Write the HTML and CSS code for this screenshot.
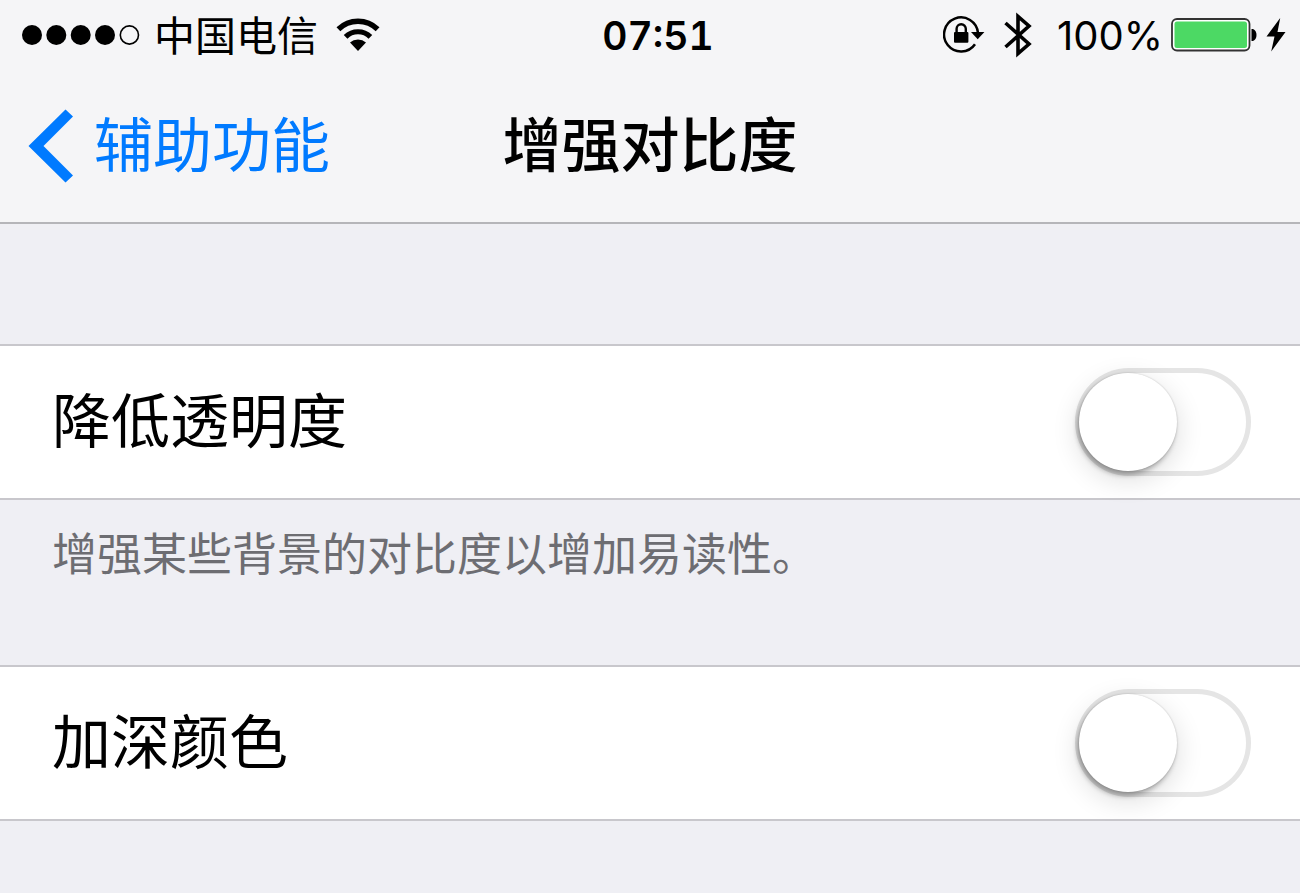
FILE: index.html
```html
<!DOCTYPE html>
<html lang="zh-CN">
<head>
  <meta charset="utf-8">
  <meta name="viewport" content="width=device-width, initial-scale=1">
  <title>增强对比度</title>
  <link rel="stylesheet" href="styles.css">
</head>
<body>
  <header class="top">
    <div class="status">
      <div class="status-left">
        <svg class="signal" width="118" height="20" viewBox="0 0 118 20" aria-hidden="true">
          <circle cx="10" cy="10" r="10"/>
          <circle cx="34.3" cy="10" r="10"/>
          <circle cx="58.7" cy="10" r="10"/>
          <circle cx="83" cy="10" r="10"/>
          <circle cx="107.4" cy="10" r="9.1" fill="none" stroke="#000" stroke-width="1.6"/>
        </svg>
        <span class="carrier">中国电信</span>
        <svg class="wifi" width="44" height="34" viewBox="0 0 44 34" aria-hidden="true">
          <path d="M2.4 11.2a28 28 0 0 1 39.2 0" fill="none" stroke="#000" stroke-width="5.4"/>
          <path d="M9.6 18.9a17.5 17.5 0 0 1 24.800 0" fill="none" stroke="#000" stroke-width="5.2"/>
          <path d="M22 33l-8-8.400a12 12 0 0 1 16 0z"/>
        </svg>
      </div>
      <time class="clock">07:51</time>
      <div class="status-right">
        <svg class="lock" width="42" height="38" viewBox="0 0 42 38" aria-hidden="true">
          <path d="M32 28.200A17 17 0 1 1 35 17" fill="none" stroke="#000" stroke-width="2.500"/>
          <path d="M28 16h13.400l-6.700 7.200z"/>
          <rect x="11" y="16" width="14.400" height="10.800" rx="1"/>
          <path d="M13.600 17v-4.200a4.600 4.600 0 0 1 9.200 0v4.200" fill="none" stroke="#000" stroke-width="2.400"/>
        </svg>
        <svg class="bluetooth" width="28" height="48" viewBox="0 0 28 48" aria-hidden="true">
          <path d="M1.500 12l23.500 21-11 9.500v-37l11 9.500-23.500 21" fill="none" stroke="#000" stroke-width="3.600"/>
        </svg>
        <span class="percent">100%</span>
        <svg class="battery" width="86" height="34" viewBox="0 0 86 34" aria-hidden="true">
          <rect x="1" y="1" width="77.500" height="31.500" rx="5" fill="#fff" stroke="#333" stroke-width="1.800"/>
          <rect x="3.500" y="3.500" width="72.500" height="26.500" rx="2.500" fill="#4cd964"/>
          <path d="M80.500 11h1.500q3.500 1.500 3.500 6t-3.500 6h-1.500z"/>
        </svg>
        <svg class="bolt" width="20" height="34" viewBox="0 0 20 34" aria-hidden="true">
          <path d="M14.200 0L0.500 18.500h8L5.200 33.500 19.500 14h-8z"/>
        </svg>
      </div>
    </div>
    <nav class="nav">
      <a class="back" href="#">
        <svg width="45" height="74" viewBox="0 0 45 74" aria-hidden="true">
          <path d="M37.500 0.500l7.500 7L15.500 37l29.500 29.500-7.500 7L0.500 37z" fill="#007aff"/>
        </svg>
        <span class="back-text">辅助功能</span>
      </a>
      <h1 class="title">增强对比度</h1>
    </nav>
  </header>
  <main class="settings">
    <section>
      <div class="row">
        <label class="label" for="transparency">降低透明度</label>
        <input class="switch" type="checkbox" role="switch" id="transparency" aria-describedby="transparency-note">
      </div>
      <p class="note" id="transparency-note">增强某些背景的对比度以增加易读性。</p>
    </section>
    <section>
      <div class="row">
        <label class="label" for="darken">加深颜色</label>
        <input class="switch" type="checkbox" role="switch" id="darken">
      </div>
    </section>
  </main>
</body>
</html>
```
FILE: styles.css
```css
* {
  box-sizing: border-box;
}

body {
  margin: 0;
  background: #efeff4;
  color: #000;
  font-family: "Noto Sans CJK SC", sans-serif;
}

svg {
  display: block;
  flex: none;
}

.top {
  background: #f5f5f7;
  border-bottom: 2px solid #b5b5b9;
}

.status {
  display: grid;
  grid-template-columns: 1fr auto 1fr;
  align-items: center;
  height: 70px;
  padding: 0 14px 0 22px;
}

.status-left,
.status-right {
  display: flex;
  align-items: center;
}

.status-right {
  justify-content: flex-end;
}

.carrier {
  margin: 0 18px 0 14px;
  padding-bottom: 4px;
  font-size: 41px;
  line-height: 60px;
}

.clock,
.percent {
  padding-top: 2px;
  font-family: Inter, sans-serif;
  font-size: 40px;
  line-height: 48px;
}

.clock {
  padding-left: 8px;
  font-size: 39px;
  font-weight: 600;
  font-variant-numeric: tabular-nums;
}

.bluetooth {
  margin: 0 25px 0 19px;
}

.battery {
  margin: 0 9px 0 8px;
}

.nav {
  display: grid;
  grid-template-columns: 1fr auto 1fr;
  align-items: center;
  height: 152px;
  padding: 0 28px;
}

.back {
  display: flex;
  align-items: center;
  gap: 21px;
  color: #007aff;
  text-decoration: none;
}

.back-text,
.title,
.label {
  padding-bottom: 8px;
  font-size: 59px;
  line-height: 80px;
}

.title {
  margin: 0;
  font-weight: 500;
}

.settings {
  padding-top: 120px;
}

.row {
  display: flex;
  align-items: center;
  justify-content: space-between;
  height: 156px;
  padding: 0 49px 0 52px;
  background: #fff;
  border: solid #c8c7cc;
  border-width: 2px 0;
}

.note {
  margin: 0;
  padding: 19px 52px 80px;
  color: #6d6d72;
  font-size: 45px;
  line-height: 66px;
}

.switch {
  flex: none;
  width: 176px;
  height: 108px;
  margin: 0;
  padding: 5px 4px;
  appearance: none;
  border-radius: 54px;
  box-shadow: inset 0 0 0 5px #e5e5e5;
}

.switch::before {
  content: "";
  display: block;
  width: 98px;
  height: 98px;
  border-radius: 50%;
  background: #fff;
  box-shadow: 0 0 2px rgba(0, 0, 0, 0.2), -2px 4px 5px rgba(0, 0, 0, 0.28), 0 8px 28px rgba(0, 0, 0, 0.14);
}

.switch:checked {
  background: #4cd964;
  box-shadow: none;
}

.switch:checked::before {
  margin-left: auto;
}
```
